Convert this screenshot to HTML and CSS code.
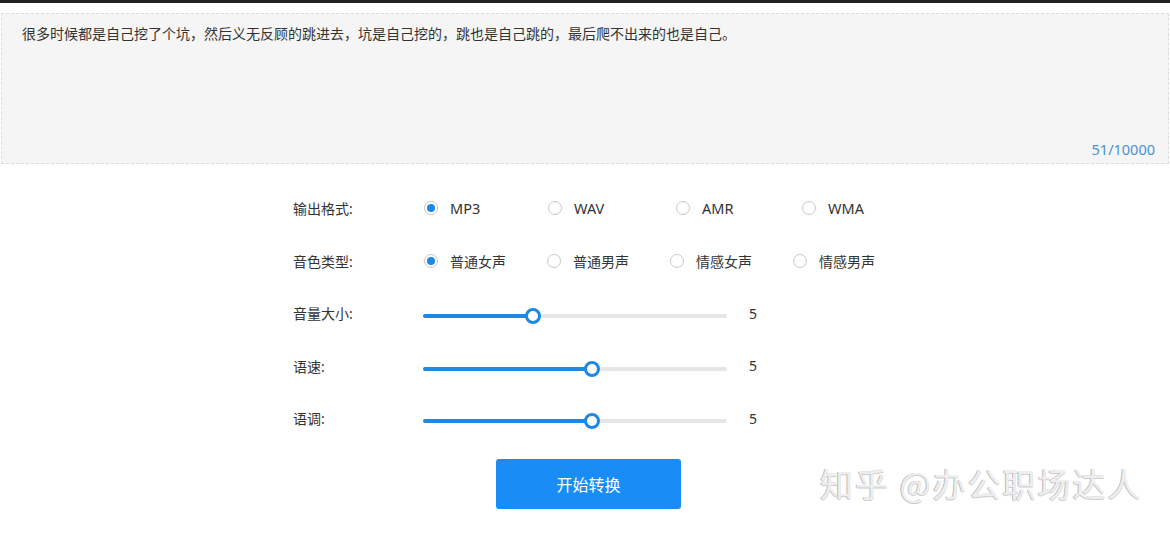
FILE: index.html
```html
<!DOCTYPE html>
<html lang="zh-CN">
<head>
    <meta charset="UTF-8">
    <title>文字转语音</title>
    <link rel="stylesheet" href="styles.css">
</head>
<body>
    <div class="topbar"></div>

    <div class="text-box">
        <div class="text-content">很多时候都是自己挖了个坑，然后义无反顾的跳进去，坑是自己挖的，跳也是自己跳的，最后爬不出来的也是自己。</div>
        <div class="counter">51/10000</div>
    </div>

    <div class="form">
        <div class="form-row">
            <div class="form-label">输出格式:</div>
            <div class="radio-group fmt">
                <label class="radio checked"><span class="dot"></span>MP3</label>
                <label class="radio w2"><span class="dot"></span>WAV</label>
                <label class="radio w3"><span class="dot"></span>AMR</label>
                <label class="radio"><span class="dot"></span>WMA</label>
            </div>
        </div>
        <div class="form-row">
            <div class="form-label">音色类型:</div>
            <div class="radio-group voice">
                <label class="radio checked"><span class="dot"></span>普通女声</label>
                <label class="radio"><span class="dot"></span>普通男声</label>
                <label class="radio"><span class="dot"></span>情感女声</label>
                <label class="radio"><span class="dot"></span>情感男声</label>
            </div>
        </div>
        <div class="form-row">
            <div class="form-label">音量大小:</div>
            <div class="slider">
                <div class="track"><div class="fill" style="width: 110px"></div><span class="thumb" style="left: 110px"></span></div>
                <span class="value">5</span>
            </div>
        </div>
        <div class="form-row">
            <div class="form-label">语速:</div>
            <div class="slider">
                <div class="track"><div class="fill" style="width: 169px"></div><span class="thumb" style="left: 169px"></span></div>
                <span class="value">5</span>
            </div>
        </div>
        <div class="form-row">
            <div class="form-label">语调:</div>
            <div class="slider">
                <div class="track"><div class="fill" style="width: 169px"></div><span class="thumb" style="left: 169px"></span></div>
                <span class="value">5</span>
            </div>
        </div>
        <button class="start-button">开始转换</button>
    </div>

    <div class="watermark">知乎 @办公职场达人</div>
</body>
</html>
```

FILE: styles.css
```css
body {
    margin: 0;
    padding: 0;
    background-color: #FFFFFF;
    font-family: "Noto Sans", "Noto Sans CJK SC", sans-serif;
    color: #333333;
    position: relative;
    height: 533px;
    overflow: hidden;
}

.topbar {
    height: 3px;
    background-color: #222222;
}

.text-box {
    margin: 10px 1px 0 1px;
    height: 149px;
    background-color: #F5F5F5;
    border: 1px dashed #DDDDDD;
    position: relative;
}

.text-content {
    padding: 10px 0 0 20px;
    font-size: 14px;
    line-height: 20px;
    color: #333333;
}

.counter {
    position: absolute;
    right: 13px;
    bottom: 4px;
    font-size: 14.5px;
    color: #4A8FD8;
}

.form {
    width: 584px;
    margin: 18px auto 0 auto;
}

.form-row {
    display: grid;
    grid-template-columns: 130px 1fr;
    align-items: center;
    height: 52.5px;
    font-size: 14px;
}

.form-label {
    color: #333333;
}

.radio-group {
    display: flex;
    align-items: center;
    margin-left: 1px;
}

.radio {
    display: flex;
    align-items: center;
    gap: 12px;
    color: #333333;
}

.fmt .radio {
    width: 124px;
    font-size: 14.5px;
}

.fmt .radio.w2 {
    width: 128px;
}

.fmt .radio.w3 {
    width: 126px;
}

.voice .radio {
    width: 123px;
}

.dot {
    width: 14px;
    height: 14px;
    border: 1px solid #C8C8C8;
    border-radius: 50%;
    box-sizing: border-box;
    display: flex;
    align-items: center;
    justify-content: center;
    background-color: #FFFFFF;
}

.radio.checked .dot::after {
    content: "";
    width: 8px;
    height: 8px;
    border-radius: 50%;
    background-color: #1E88E5;
}

.slider {
    display: flex;
    align-items: center;
    padding-top: 6px;
}

.track {
    position: relative;
    width: 304px;
    height: 4px;
    background-color: #E6E6E6;
    border-radius: 2px;
}

.fill {
    height: 4px;
    background-color: #1E88E5;
    border-radius: 2px;
}

.thumb {
    position: absolute;
    top: 50%;
    width: 16px;
    height: 16px;
    margin: -8px 0 0 -8px;
    border: 3px solid #1E88E5;
    border-radius: 50%;
    background-color: #FFFFFF;
    box-sizing: border-box;
}

.value {
    margin-left: 22px;
    margin-top: -6px;
    font-size: 14px;
    color: #333333;
}

.start-button {
    display: block;
    margin: 14px 0 0 203px;
    width: 185px;
    height: 50px;
    font-family: "Noto Sans CJK SC", sans-serif;
    font-size: 16px;
    color: #FFFFFF;
    background-color: #1A8CF5;
    border: none;
    border-radius: 3px;
    cursor: pointer;
}

.watermark {
    position: absolute;
    left: 820px;
    top: 459px;
    font-family: "Noto Sans CJK SC", sans-serif;
    font-size: 33px;
    letter-spacing: 2px;
    color: #EEEEEE;
    text-shadow: -1px 0 0 #B8B8B8, 0 1px 0 #CFCFCF;
    white-space: nowrap;
}
```
